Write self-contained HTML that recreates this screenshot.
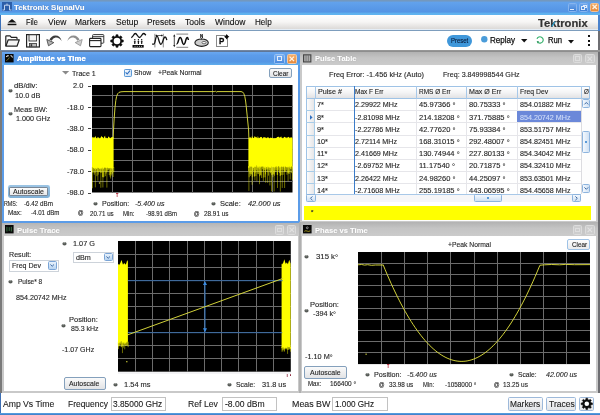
<!DOCTYPE html>
<html><head><meta charset="utf-8"><title>Tektronix SignalVu</title>
<style>
html,body{margin:0;padding:0}
body{width:600px;height:415px;overflow:hidden;background:#fff;position:relative;font-family:"Liberation Sans",sans-serif}
.a{position:absolute;box-sizing:border-box}
.t{position:absolute;white-space:nowrap;line-height:1;font-family:"Liberation Sans",sans-serif;transform-origin:0 0;will-change:transform;-webkit-text-stroke-width:0.12px}
.s{display:inline-block;transform-origin:0 0}
.d{position:relative;top:0.8px}
svg{position:absolute;overflow:visible}
</style></head><body>
<div class="a" style="left:0px;top:0px;width:600px;height:14.6px;background:linear-gradient(#7398be 0%,#7398be 7%,#62a2ec 14%,#5a9ae8 50%,#5494e4 80%,#5eb0ee 88%,#60b4f0 100%)"></div>
<svg class="a" style="left:2px;top:2px" width="10" height="10" viewBox="0 0 10 10"><rect width="10" height="9" fill="#2c5ea8"/><path d="M0.5 8 H2.5 V3.2 H7.5 V8 H9.5 M5 3.2 V1.5" fill="none" stroke="#cfe0f6" stroke-width="0.9"/></svg>
<span class="t" style="left:14px;top:3px;font-size:7.9px;color:#fff;transform:translate3d(0,0.89px,0);font-weight:bold;text-shadow:0 0 1px #2a5aa0;">Tektronix SignalVu</span>
<div class="a" style="left:567.5px;top:2.5px;width:9px;height:9.5px;background:linear-gradient(#6ea6ec,#3f7fd4);border-radius:1.5px;border:0.5px solid #86b4ee"></div>
<div class="a" style="left:570px;top:8.6px;width:3.6px;height:1.4px;background:#e8f0fb"></div>
<div class="a" style="left:579px;top:2.5px;width:9.3px;height:9.5px;background:linear-gradient(#6ea6ec,#3f7fd4);border-radius:1.5px;border:0.5px solid #86b4ee"></div>
<div class="a" style="left:582.6px;top:4.6px;width:4px;height:3.4px;border:0.9px solid #dfeafa"></div>
<div class="a" style="left:581px;top:6.4px;width:4px;height:3.4px;border:0.9px solid #dfeafa;background:#4f8ddd"></div>
<div class="a" style="left:590px;top:2.5px;width:8.5px;height:9.5px;background:linear-gradient(#f0a860,#e8893a);border-radius:1.5px;border:0.5px solid #f4c090"></div>
<svg class="a" style="left:591.6px;top:4.3px" width="5.4" height="5.8" viewBox="0 0 6 6"><path d="M0.6 0.6 L5.4 5.4 M5.4 0.6 L0.6 5.4" stroke="#fdf0e0" stroke-width="1.5"/></svg>
<div class="a" style="left:0px;top:14.6px;width:600px;height:14.6px;background:linear-gradient(#ffffff 0%,#f6f5f4 50%,#dddbd9 97%,#e6eef6 100%)"></div>
<div class="a" style="left:0px;top:29.2px;width:600px;height:0.7px;background:#e4edf6"></div>
<div class="a" style="left:0px;top:29.8px;width:600px;height:1.6px;background:linear-gradient(#86a4c2,#7496b8)"></div>
<div class="a" style="left:0px;top:14.5px;width:1.3px;height:16.5px;background:#3d71b8"></div>
<div class="a" style="left:598.2px;top:14.5px;width:1.8px;height:16.5px;background:#4a82cc"></div>
<svg class="a" style="left:7px;top:18.5px" width="10" height="7" viewBox="0 0 10 7"><path d="M5 0 L9.3 3.6 H0.7 Z" fill="#111"/><rect x="0.6" y="4.7" width="8.8" height="1.5" fill="#111"/></svg>
<span class="t" style="left:26px;top:18px;font-size:8.5px;color:#111;transform:translate3d(0,0.46px,0);-webkit-text-stroke:0.12px #111;"><span class="s" style="transform:scaleX(0.862)">File</span></span>
<span class="t" style="left:48px;top:18px;font-size:8.5px;color:#111;transform:translate3d(0,0.46px,0);-webkit-text-stroke:0.12px #111;">View</span>
<span class="t" style="left:75px;top:18px;font-size:8.5px;color:#111;transform:translate3d(0,0.46px,0);-webkit-text-stroke:0.12px #111;">Markers</span>
<span class="t" style="left:116px;top:18px;font-size:8.5px;color:#111;transform:translate3d(0,0.46px,0);-webkit-text-stroke:0.12px #111;">Setup</span>
<span class="t" style="left:147px;top:18px;font-size:8.5px;color:#111;transform:translate3d(0,0.46px,0);-webkit-text-stroke:0.12px #111;"><span class="s" style="transform:scaleX(0.983)">Presets</span></span>
<span class="t" style="left:185px;top:18px;font-size:8.5px;color:#111;transform:translate3d(0,0.46px,0);-webkit-text-stroke:0.12px #111;"><span class="s" style="transform:scaleX(1.010)">Tools</span></span>
<span class="t" style="left:215px;top:18px;font-size:8.5px;color:#111;transform:translate3d(0,0.46px,0);-webkit-text-stroke:0.12px #111;"><span class="s" style="transform:scaleX(1.007)">Window</span></span>
<span class="t" style="left:255px;top:18px;font-size:8.5px;color:#111;transform:translate3d(0,0.46px,0);-webkit-text-stroke:0.12px #111;"><span class="s" style="transform:scaleX(0.953)">Help</span></span>
<span class="t" style="left:538px;top:18px;font-size:10.3px;color:#333;transform:translate3d(0,0.68px,0);font-weight:bold;-webkit-text-stroke:0.2px #333;"><span class="s" style="transform:scaleX(1.089)">Tektronix</span></span>
<svg class="a" style="left:551px;top:19px" width="5" height="8" viewBox="0 0 5 8"><path d="M0.2 7.6 L3.3 2.6 L4.6 2.6 L1.6 7.6 Z" fill="#28a6d8"/></svg>
<div class="a" style="left:0px;top:31.4px;width:600px;height:19.6px;background:#fff"></div>
<div class="a" style="left:0px;top:31px;width:1.2px;height:20px;background:#6a6a6a"></div>
<div class="a" style="left:597.8px;top:31px;width:2.2px;height:382.3px;background:#6e6e72"></div>
<div class="a" style="left:0px;top:49.7px;width:300px;height:2.3px;background:linear-gradient(#7c8ea6,#566f92)"></div>
<div class="a" style="left:300px;top:49.7px;width:300px;height:2.3px;background:linear-gradient(#9a9a9a,#8a8a8a)"></div>
<svg class="a" style="left:5px;top:35px" width="15" height="12" viewBox="0 0 15 12"><path d="M0.8 11 V1.6 Q0.8 0.8 1.6 0.8 H5 L6.4 2.4 H11.4 Q12 2.4 12 3.2 V4.6" fill="none" stroke="#222" stroke-width="1.2"/><path d="M0.9 11.2 L3.2 4.8 H14.3 L12 11.2 Z" fill="#f4f4f4" stroke="#222" stroke-width="1.2" stroke-linejoin="round"/></svg>
<svg class="a" style="left:26px;top:34px" width="14" height="13.6" viewBox="0 0 14 13.6"><rect x="0.6" y="0.6" width="12.8" height="12.4" fill="#fff" stroke="#222" stroke-width="1.2"/><rect x="3" y="0.8" width="7.6" height="6.2" fill="#f2f2f2" stroke="#333" stroke-width="0.9"/><rect x="3.4" y="9.4" width="7" height="3.4" fill="#bbb" stroke="#333" stroke-width="0.8"/><rect x="4.6" y="10.2" width="1.6" height="2.4" fill="#333"/></svg>
<svg class="a" style="left:46px;top:32px" width="16" height="16" viewBox="0 0 16 16"><g transform="translate(0 0)"><path d="M15.7 9.2 Q14.4 3.4 9.2 3.5 Q5.4 3.8 3.4 7.6 L5.6 8.8 Q7 6 9.6 5.6 Q13.2 5.2 15.7 9.2 Z" fill="#3c3c3c"/><path d="M0.8 7.5 L7.8 10.6 L2.5 13.8 Z" fill="#b4b4b4" stroke="#3c3c3c" stroke-width="0.8" stroke-linejoin="round"/></g></svg>
<svg class="a" style="left:67.2px;top:32px" width="16" height="16" viewBox="0 0 16 16"><g transform="translate(16 0) scale(-1 1)"><path d="M15.7 9.2 Q14.4 3.4 9.2 3.5 Q5.4 3.8 3.4 7.6 L5.6 8.8 Q7 6 9.6 5.6 Q13.2 5.2 15.7 9.2 Z" fill="#8e8e8e"/><path d="M0.8 7.5 L7.8 10.6 L2.5 13.8 Z" fill="#cfcfcf" stroke="#8e8e8e" stroke-width="0.8" stroke-linejoin="round"/></g></svg>
<svg class="a" style="left:89px;top:34px" width="15.6" height="13.2" viewBox="0 0 15.6 13.2"><rect x="3.6" y="0.6" width="11.2" height="8.6" rx="0.8" fill="#fff" stroke="#333" stroke-width="1"/><path d="M3.6 2.6 H14.8" stroke="#333" stroke-width="0.9"/><rect x="0.6" y="4.4" width="11.4" height="8.2" rx="0.8" fill="#fff" stroke="#222" stroke-width="1.1"/><path d="M0.6 6.6 H12" stroke="#222" stroke-width="1.1"/></svg>
<svg class="a" style="left:110.4px;top:33.7px" width="14" height="14" viewBox="0 0 14 14"><path d="M11.76 5.86 L13.32 6.00 L13.32 8.00 L11.76 8.14 L11.18 9.56 L12.18 10.76 L10.76 12.18 L9.56 11.18 L8.14 11.76 L8.00 13.32 L6.00 13.32 L5.86 11.76 L4.44 11.18 L3.24 12.18 L1.82 10.76 L2.82 9.56 L2.24 8.14 L0.68 8.00 L0.68 6.00 L2.24 5.86 L2.82 4.44 L1.82 3.24 L3.24 1.82 L4.44 2.82 L5.86 2.24 L6.00 0.68 L8.00 0.68 L8.14 2.24 L9.56 2.82 L10.76 1.82 L12.18 3.24 L11.18 4.44 Z" fill="#0c0c0c" stroke="#0c0c0c" stroke-width="0.5" stroke-linejoin="round"/><circle cx="7" cy="7" r="3.3" fill="#fff"/></svg>
<svg class="a" style="left:131px;top:33px" width="15" height="15" viewBox="0 0 15 15"><path d="M0.2 4.5 C2 4.5 2.6 0.5 4.3 0.5 C6 0.5 6.8 4.5 8.5 4.5 C10.2 4.5 11 0.5 12.7 0.5 C13.6 0.5 14 1.4 14.8 2.2" fill="none" stroke="#111" stroke-width="1.3"/><path d="M3.8 6 V11 M7.4 6 V11 M10.7 6 V11" stroke="#111" stroke-width="1.1" stroke-dasharray="1.3 0.5"/><path d="M2.7 8.4 L3.8 10.6 L4.9 8.4 Z M6.3 8.4 L7.4 10.6 L8.5 8.4 Z M9.6 8.4 L10.7 10.6 L11.8 8.4 Z" fill="#111"/><rect x="1.5" y="12" width="11.2" height="2.6" fill="#0c0c0c"/><rect x="3.6" y="12.9" width="0.8" height="0.8" fill="#fff"/><rect x="5.8" y="12.9" width="0.8" height="0.8" fill="#fff"/><rect x="8" y="12.9" width="0.8" height="0.8" fill="#fff"/><rect x="10.2" y="12.9" width="0.8" height="0.8" fill="#fff"/></svg>
<svg class="a" style="left:152px;top:33px" width="15.4" height="15" viewBox="0 0 15.4 15"><path d="M2.9 0.8 V14.4 M11.3 0.8 V14.4" stroke="#555" stroke-width="0.7"/><path d="M0.1 11.1 H1.8 C3.4 11.1 3.4 3.2 5 3.2 C6.6 3.2 7 11.3 8.9 11.3 C10.8 11.3 11.2 4 13.1 4 C14.2 4 14.4 5.6 14.8 7.1" fill="none" stroke="#111" stroke-width="1.3"/><path d="M4 2.5 H10.2" stroke="#222" stroke-width="0.7"/><path d="M3.2 2.5 L5 1.4 V3.6 Z M11 2.5 L9.2 1.4 V3.6 Z" fill="#111"/></svg>
<svg class="a" style="left:172.6px;top:33px" width="15.6" height="15" viewBox="0 0 15.6 15"><path d="M3.4 1.1 H15.2 M3.4 14.3 H15.2" stroke="#666" stroke-width="0.8"/><path d="M1.3 2.6 V12.8" stroke="#222" stroke-width="0.8"/><path d="M1.3 1.2 L0.2 3.4 H2.4 Z M1.3 14.2 L0.2 12 H2.4 Z" fill="#222"/><path d="M3.5 10.9 C5.6 11.2 5.2 4.4 7.2 4.4 C9.2 4.4 8.8 11.4 10.8 11.4 C12.8 11.4 12.4 4.4 14.4 4.4 C15 4.4 15.2 5.8 15.4 7" fill="none" stroke="#0c0c0c" stroke-width="1.5"/></svg>
<svg class="a" style="left:194px;top:34px" width="15.4" height="13" viewBox="0 0 15.4 13"><ellipse cx="7.6" cy="8.7" rx="6.7" ry="3.7" fill="#cdcdcd" stroke="#1c1c1c" stroke-width="1.1"/><ellipse cx="10" cy="8.6" rx="2" ry="1.2" fill="#f2f2f2" stroke="#444" stroke-width="0.7"/><path d="M7.5 4.2 V5.6" stroke="#222" stroke-width="0.8"/></svg>
<span class="t" style="left:200px;top:34px;font-size:5.2px;color:#0a0a0a;transform:translate3d(0,0.47px,0);font-weight:bold;-webkit-text-stroke:0.2px #0a0a0a;"><span class="s" style="transform:scaleX(0.850)">N</span></span>
<div class="a" style="left:215.5px;top:35.3px;width:12.4px;height:12px;border:0.8px solid #8a8a8a;background:#fff"></div>
<span class="t" style="left:219px;top:37px;font-size:9.2px;color:#0a0a0a;transform:translate3d(0,0.46px,0);font-weight:bold;-webkit-text-stroke:0.3px #0a0a0a;"><span class="s" style="transform:scaleX(0.867)">P</span></span>
<div class="a" style="left:224.8px;top:34px;width:4.4px;height:4.4px;background:#fff"></div>
<svg class="a" style="left:224.4px;top:33.5px" width="5.4" height="5.4" viewBox="0 0 4.8 4.8"><path d="M2.4 0 L3.3 1.5 L4.8 2.4 L3.3 3.3 L2.4 4.8 L1.5 3.3 L0 2.4 L1.5 1.5 Z" fill="#0a0a0a"/><circle cx="2.4" cy="2.4" r="1.3" fill="#0a0a0a"/></svg>
<div class="a" style="left:446.7px;top:34.7px;width:25.4px;height:12px;background:#3f97da;border-radius:6px"></div>
<span class="t" style="left:451px;top:38px;font-size:6.6px;color:#081a3a;transform:translate3d(0,0.29px,0);"><span class="s" style="transform:scaleX(0.895)">Preset</span></span>
<svg class="a" style="left:481px;top:36.3px" width="6.6" height="6.6" viewBox="0 0 6.6 6.6"><circle cx="3.3" cy="3.3" r="3.2" fill="#4a9cd9"/></svg>
<span class="t" style="left:490px;top:35px;font-size:8.9px;color:#0c0c0c;transform:translate3d(0,0.86px,0);-webkit-text-stroke:0.25px #111;"><span class="s" style="transform:scaleX(0.907)">Replay</span></span>
<svg class="a" style="left:521px;top:39.2px" width="6.4" height="3.4" viewBox="0 0 6.4 3.4"><path d="M0 0 H6.4 L3.2 3.4 Z" fill="#111"/></svg>
<svg class="a" style="left:536.4px;top:35.7px" width="8" height="8" viewBox="0 0 8 8"><path d="M1 2.9 A3.2 3.2 0 1 1 1.9 6.4" fill="none" stroke="#33b06a" stroke-width="1.15"/><path d="M0.7 5.1 L3.2 5.4 L1.6 7.6 Z" fill="#1f8f52"/></svg>
<span class="t" style="left:548px;top:36px;font-size:8.8px;color:#0c0c0c;transform:translate3d(0,0.36px,0);-webkit-text-stroke:0.25px #111;"><span class="s" style="transform:scaleX(0.875)">Run</span></span>
<svg class="a" style="left:568px;top:39.6px" width="6" height="3.4" viewBox="0 0 6 3.4"><path d="M0 0 H6 L3 3.4 Z" fill="#111"/></svg>
<div class="a" style="left:588px;top:34.8px;width:2px;height:2px;background:#111"></div>
<div class="a" style="left:588px;top:39.6px;width:2px;height:2px;background:#111"></div>
<div class="a" style="left:588px;top:44.4px;width:2px;height:2px;background:#111"></div>
<div class="a" style="left:0px;top:51px;width:1.6px;height:342.5px;background:#7a7a7a"></div>
<div class="a" style="left:300px;top:51.8px;width:298.20000000000005px;height:170.8px;background:#fff;border:2.4px solid #c9c9c9;border-top:none"></div>
<div class="a" style="left:300px;top:51.8px;width:298.20000000000005px;height:13.6px;background:linear-gradient(#b2b2b2 0%,#c4c4c4 45%,#cbcbcb 100%)"></div>
<svg class="a" style="left:303.1px;top:53.599999999999994px" width="8.6" height="8.4" viewBox="0 0 9 9" preserveAspectRatio="none"><rect x="0.6" y="0.9" width="7.6" height="7.6" fill="#aeaeae" stroke="#454545" stroke-width="1.2"/><path d="M3.2 1 V8.4 M5.6 1 V8.4" stroke="#6a6a6a" stroke-width="0.8"/></svg>
<span class="t" style="left:315px;top:55px;font-size:7.7px;color:#fff;transform:translate3d(0,0.49px,0);font-weight:bold;text-shadow:0 0 1.2px rgba(90,90,90,.4);"><span class="s" style="transform:scaleX(0.986)">Pulse Table</span></span>
<div class="a" style="left:573.0px;top:54.0px;width:9.4px;height:9.4px;background:#cdcdcd;border:0.7px solid #dcdcdc;border-radius:1.5px"></div>
<div class="a" style="left:575.2px;top:56.4px;width:5px;height:4.6px;border:0.9px solid #dedede;border-top-width:1.5px"></div>
<div class="a" style="left:585.0px;top:54.0px;width:9.6px;height:9.4px;background:#cdcdcd;border:0.7px solid #dcdcdc;border-radius:1.5px"></div>
<svg class="a" style="left:587.0px;top:55.8px" width="5.6" height="5.8" viewBox="0 0 6 6"><path d="M0.6 0.6 L5.4 5.4 M5.4 0.6 L0.6 5.4" stroke="#e2e2e2" stroke-width="1.2"/></svg>
<div class="a" style="left:1.6px;top:222.4px;width:298.4px;height:170.99999999999997px;background:#fff;border:2.4px solid #c9c9c9;border-top:none"></div>
<div class="a" style="left:1.6px;top:222.4px;width:298.4px;height:13.6px;background:linear-gradient(#b2b2b2 0%,#c4c4c4 45%,#cbcbcb 100%)"></div>
<svg class="a" style="left:5.2px;top:224.8px" width="8.6" height="8.4" viewBox="0 0 9 9" preserveAspectRatio="none"><rect width="9" height="9" fill="#0a0a0a"/><path d="M2 2 V7 M4.4 2.4 V6.4 M6.6 2 V7" stroke="#4a9a5a" stroke-width="0.8" fill="none"/></svg>
<span class="t" style="left:17px;top:226px;font-size:7.7px;color:#fff;transform:translate3d(0,0.69px,0);font-weight:bold;text-shadow:0 0 1.2px rgba(90,90,90,.4);">Pulse Trace</span>
<div class="a" style="left:274.8px;top:225.2px;width:9.4px;height:9.4px;background:#cdcdcd;border:0.7px solid #dcdcdc;border-radius:1.5px"></div>
<div class="a" style="left:277.0px;top:227.6px;width:5px;height:4.6px;border:0.9px solid #dedede;border-top-width:1.5px"></div>
<div class="a" style="left:286.8px;top:225.2px;width:9.6px;height:9.4px;background:#cdcdcd;border:0.7px solid #dcdcdc;border-radius:1.5px"></div>
<svg class="a" style="left:288.8px;top:227.0px" width="5.6" height="5.8" viewBox="0 0 6 6"><path d="M0.6 0.6 L5.4 5.4 M5.4 0.6 L0.6 5.4" stroke="#e2e2e2" stroke-width="1.2"/></svg>
<div class="a" style="left:300px;top:222.4px;width:298.20000000000005px;height:170.99999999999997px;background:#fff;border:2.4px solid #c9c9c9;border-top:none"></div>
<div class="a" style="left:300px;top:222.4px;width:298.20000000000005px;height:13.6px;background:linear-gradient(#b2b2b2 0%,#c4c4c4 45%,#cbcbcb 100%)"></div>
<svg class="a" style="left:303.1px;top:224.8px" width="8.6" height="8.4" viewBox="0 0 9 9" preserveAspectRatio="none"><rect width="9" height="9" fill="#0a0a0a"/><circle cx="4.5" cy="3" r="1" fill="none" stroke="#ddd" stroke-width="0.6"/><path d="M1.4 6.8 Q3 5.6 4.5 6.6 Q6 7.4 7.6 6.2" stroke="#c8b820" stroke-width="0.8" fill="none"/></svg>
<span class="t" style="left:315px;top:226px;font-size:7.7px;color:#fff;transform:translate3d(0,0.69px,0);font-weight:bold;text-shadow:0 0 1.2px rgba(90,90,90,.4);"><span class="s" style="transform:scaleX(0.989)">Phase vs Time</span></span>
<div class="a" style="left:573.0px;top:225.2px;width:9.4px;height:9.4px;background:#cdcdcd;border:0.7px solid #dcdcdc;border-radius:1.5px"></div>
<div class="a" style="left:575.2px;top:227.6px;width:5px;height:4.6px;border:0.9px solid #dedede;border-top-width:1.5px"></div>
<div class="a" style="left:585.0px;top:225.2px;width:9.6px;height:9.4px;background:#cdcdcd;border:0.7px solid #dcdcdc;border-radius:1.5px"></div>
<svg class="a" style="left:587.0px;top:227.0px" width="5.6" height="5.8" viewBox="0 0 6 6"><path d="M0.6 0.6 L5.4 5.4 M5.4 0.6 L0.6 5.4" stroke="#e2e2e2" stroke-width="1.2"/></svg>
<div class="a" style="left:1.6px;top:51.8px;width:298.59999999999997px;height:170.8px;background:#fff;border:2.4px solid #5b9ce8;border-top:none"></div>
<div class="a" style="left:1.6px;top:51.8px;width:298.59999999999997px;height:13.6px;background:linear-gradient(#6aa8f0 0%,#5c9cea 25%,#5596e4 75%,#60aeec 100%)"></div>
<svg class="a" style="left:5.2px;top:53.599999999999994px" width="8.6" height="8.4" viewBox="0 0 9 9" preserveAspectRatio="none"><rect width="9" height="9" fill="#080808"/><path d="M1.6 7.3 L3 5.6 L4.6 4.4" stroke="#8a7420" stroke-width="1" fill="none"/><path d="M3.6 4.6 L4.8 3.6" stroke="#4a6a30" stroke-width="0.9" fill="none"/><path d="M1.2 3.2 L2.6 2 L4 1.9" stroke="#e8e8e8" stroke-width="1.1" fill="none"/><path d="M5.8 1.6 L7 2.2 L7.9 3.8" stroke="#e0e0e0" stroke-width="1.1" fill="none"/></svg>
<span class="t" style="left:17px;top:55px;font-size:7.7px;color:#fff;transform:translate3d(0,0.49px,0);font-weight:bold;text-shadow:0 0 0.6px #fff;"><span class="s" style="transform:scaleX(1.007)">Amplitude vs Time</span></span>
<div class="a" style="left:274.4px;top:53.699999999999996px;width:10.2px;height:10px;background:linear-gradient(#78aef0,#4a8ade);border:0.6px solid #9cc4f4;border-radius:1.5px"></div>
<div class="a" style="left:277.2px;top:56.4px;width:5px;height:4.6px;border:0.9px solid #e4eefc;border-top-width:1.6px"></div>
<div class="a" style="left:286.7px;top:53.699999999999996px;width:10.2px;height:10px;background:linear-gradient(#f2ae6c,#e88a3c);border:0.6px solid #f6caa0;border-radius:1.5px"></div>
<svg class="a" style="left:289.0px;top:55.8px" width="5.6" height="5.8" viewBox="0 0 6 6"><path d="M0.6 0.6 L5.4 5.4 M5.4 0.6 L0.6 5.4" stroke="#fff4e6" stroke-width="1.4"/></svg>
<div class="a" style="left:299.3px;top:222.4px;width:1.4px;height:171px;background:#b0b0b0"></div>
<svg class="a" style="left:92px;top:85px" width="200.5" height="107.5" viewBox="0 0 200.5 107.5"><rect x="0" y="0" width="200.5" height="107.5" fill="#000"/><path d="M20.05 0 V107.5 M40.10 0 V107.5 M60.15 0 V107.5 M80.20 0 V107.5 M100.25 0 V107.5 M120.30 0 V107.5 M140.35 0 V107.5 M160.40 0 V107.5 M180.45 0 V107.5 M0 10.75 H200.5 M0 21.50 H200.5 M0 32.25 H200.5 M0 43.00 H200.5 M0 53.75 H200.5 M0 64.50 H200.5 M0 75.25 H200.5 M0 86.00 H200.5 M0 96.75 H200.5 " stroke="#6c6c6c" stroke-width="1" fill="none" shape-rendering="crispEdges"/><path d="M0.00 52.10 L0.45 52.87 L0.90 51.63 L1.35 52.09 L1.80 53.36 L2.25 51.92 L2.70 52.70 L3.15 51.73 L3.60 50.78 L4.05 53.11 L4.50 53.53 L4.95 52.53 L5.40 51.80 L5.85 53.63 L6.30 52.23 L6.75 52.34 L7.20 53.50 L7.65 53.40 L8.10 51.94 L8.55 53.50 L9.00 52.04 L9.45 50.76 L9.90 51.79 L10.35 51.92 L10.80 52.26 L11.25 53.11 L11.70 53.66 L12.15 51.09 L12.60 52.01 L13.05 50.47 L13.50 53.61 L13.95 52.57 L14.40 52.85 L14.85 53.58 L15.30 53.11 L15.75 53.65 L16.20 51.62 L16.65 51.64 L17.10 51.73 L17.55 53.03 L18.00 52.58 L18.45 53.62 L18.90 52.84 L19.35 52.26 L19.80 52.23 L20.25 51.66 L20.70 52.25 L21.15 52.10 L21.60 53.07 L21.60 82.57 L21.15 82.84 L20.70 83.73 L20.25 83.56 L19.80 83.65 L19.35 83.23 L18.90 82.67 L18.45 82.90 L18.00 83.42 L17.55 83.50 L17.10 82.92 L16.65 83.32 L16.20 83.19 L15.75 83.12 L15.30 82.52 L14.85 82.83 L14.40 83.29 L13.95 83.35 L13.50 82.71 L13.05 82.55 L12.60 83.27 L12.15 81.88 L11.70 84.20 L11.25 83.91 L10.80 81.91 L10.35 83.65 L9.90 82.79 L9.45 84.18 L9.00 83.18 L8.55 83.51 L8.10 84.12 L7.65 83.41 L7.20 84.03 L6.75 83.20 L6.30 82.73 L5.85 83.30 L5.40 82.32 L4.95 83.91 L4.50 83.72 L4.05 83.51 L3.60 82.93 L3.15 83.22 L2.70 83.41 L2.25 83.88 L1.80 83.33 L1.35 82.93 L0.90 82.42 L0.45 81.96 L0.00 82.69 Z" fill="#ffff00"/><path d="M0.20 82.00 V87.12 M0.94 82.00 V87.97 M1.69 82.00 V85.79 M2.26 82.00 V89.68 M3.02 82.00 V88.07 M3.55 82.00 V85.40 M4.18 82.00 V85.97 M4.92 82.00 V91.20 M5.43 82.00 V86.67 M6.16 82.00 V89.61 M6.89 82.00 V87.21 M7.39 82.00 V86.78 M8.12 82.00 V86.61 M8.69 82.00 V87.79 M9.29 82.00 V87.73 M10.06 82.00 V85.68 M10.51 82.00 V92.04 M11.27 82.00 V92.39 M11.87 82.00 V92.10 M12.64 82.00 V86.22 M13.35 82.00 V91.18 M14.04 82.00 V88.62 M14.59 82.00 V87.18 M15.12 82.00 V84.97 M15.77 82.00 V86.74 M16.51 82.00 V84.79 M17.27 82.00 V90.03 M18.05 82.00 V91.66 M18.81 82.00 V89.08 M19.27 82.00 V90.44 M19.78 82.00 V86.85 M20.46 82.00 V88.66 M21.05 82.00 V92.01 M21.72 82.00 V87.18 " stroke="#ffff00" stroke-width="0.55" fill="none" opacity="0.92"/><path d="M0.50 82.00 V103.27 M3.34 82.00 V102.37 M5.86 82.00 V95.70 M8.85 82.00 V102.76 M10.89 82.00 V102.48 M14.89 82.00 V102.64 M18.63 82.00 V93.54 " stroke="#ffff00" stroke-width="0.5" fill="none" opacity="0.85"/><path d="M156.40 52.91 L156.85 53.58 L157.30 51.66 L157.75 52.96 L158.20 52.59 L158.65 52.07 L159.10 53.52 L159.55 53.27 L160.00 50.41 L160.45 52.05 L160.90 52.21 L161.35 53.02 L161.80 53.05 L162.25 52.23 L162.70 51.07 L163.15 51.61 L163.60 52.25 L164.05 52.26 L164.50 51.72 L164.95 53.17 L165.40 53.25 L165.85 50.92 L166.30 52.01 L166.75 53.58 L167.20 52.70 L167.65 53.17 L168.10 51.68 L168.55 52.32 L169.00 52.31 L169.45 52.26 L169.90 51.76 L170.35 53.69 L170.80 53.67 L171.25 52.10 L171.70 52.56 L172.15 52.48 L172.60 51.87 L173.05 52.92 L173.50 52.51 L173.95 52.22 L174.40 53.39 L174.85 52.63 L175.30 52.21 L175.75 52.39 L176.20 52.92 L176.65 51.79 L177.10 53.42 L177.55 53.23 L178.00 53.20 L178.45 52.19 L178.90 53.05 L179.35 52.96 L179.80 52.75 L180.25 52.57 L180.70 53.28 L181.15 53.15 L181.60 53.37 L182.05 53.65 L182.50 52.71 L182.95 53.57 L183.40 53.11 L183.85 53.24 L184.30 52.48 L184.75 52.94 L185.20 51.94 L185.65 52.06 L186.10 51.69 L186.55 51.71 L187.00 51.98 L187.45 52.58 L187.90 52.84 L188.35 51.60 L188.80 52.46 L189.25 51.21 L189.70 52.74 L190.15 53.61 L190.60 53.31 L191.05 51.90 L191.50 53.61 L191.95 52.34 L192.40 51.83 L192.85 51.90 L193.30 52.39 L193.75 52.21 L194.20 53.62 L194.65 52.15 L195.10 52.47 L195.55 52.63 L196.00 51.86 L196.45 52.22 L196.90 51.63 L197.35 53.56 L197.80 52.16 L198.25 52.22 L198.70 52.95 L199.15 51.85 L199.60 52.72 L200.05 52.71 L200.50 53.16 L200.50 80.89 L200.05 81.67 L199.60 81.51 L199.15 81.52 L198.70 82.58 L198.25 81.94 L197.80 83.17 L197.35 81.39 L196.90 81.46 L196.45 82.78 L196.00 81.86 L195.55 81.94 L195.10 83.16 L194.65 81.99 L194.20 82.23 L193.75 81.71 L193.30 81.34 L192.85 82.94 L192.40 82.28 L191.95 80.80 L191.50 82.26 L191.05 82.15 L190.60 81.69 L190.15 81.81 L189.70 82.19 L189.25 81.03 L188.80 82.80 L188.35 81.47 L187.90 82.97 L187.45 82.27 L187.00 80.89 L186.55 81.56 L186.10 81.34 L185.65 82.31 L185.20 82.36 L184.75 80.87 L184.30 82.66 L183.85 82.40 L183.40 81.21 L182.95 82.46 L182.50 82.81 L182.05 82.04 L181.60 82.45 L181.15 81.64 L180.70 82.35 L180.25 82.35 L179.80 82.41 L179.35 80.83 L178.90 83.07 L178.45 82.65 L178.00 82.49 L177.55 82.39 L177.10 82.69 L176.65 82.68 L176.20 81.61 L175.75 83.10 L175.30 81.15 L174.85 81.95 L174.40 81.89 L173.95 83.20 L173.50 82.83 L173.05 81.06 L172.60 83.08 L172.15 82.81 L171.70 80.93 L171.25 82.78 L170.80 81.77 L170.35 80.92 L169.90 82.45 L169.45 81.23 L169.00 82.11 L168.55 83.00 L168.10 81.02 L167.65 82.86 L167.20 81.06 L166.75 81.65 L166.30 83.03 L165.85 83.09 L165.40 82.19 L164.95 80.84 L164.50 80.85 L164.05 82.49 L163.60 81.95 L163.15 81.61 L162.70 82.25 L162.25 81.20 L161.80 82.94 L161.35 83.06 L160.90 82.09 L160.45 82.89 L160.00 81.30 L159.55 82.28 L159.10 81.18 L158.65 81.47 L158.20 82.11 L157.75 81.07 L157.30 83.06 L156.85 83.01 L156.40 82.71 Z" fill="#ffff00"/><path d="M156.60 81.00 V86.01 M157.21 81.00 V92.22 M157.97 81.00 V88.75 M158.43 81.00 V90.93 M159.03 81.00 V89.03 M159.72 81.00 V89.56 M160.34 81.00 V92.17 M160.93 81.00 V87.31 M161.67 81.00 V85.49 M162.23 81.00 V91.41 M162.70 81.00 V91.47 M163.39 81.00 V87.70 M163.94 81.00 V90.95 M164.71 81.00 V84.98 M165.33 81.00 V88.78 M165.96 81.00 V86.74 M166.46 81.00 V89.13 M167.19 81.00 V84.29 M167.72 81.00 V91.31 M168.45 81.00 V89.85 M168.91 81.00 V90.41 M169.70 81.00 V92.98 M170.40 81.00 V84.11 M171.14 81.00 V85.70 M171.82 81.00 V92.55 M172.52 81.00 V84.91 M173.07 81.00 V92.23 M173.57 81.00 V89.36 M174.17 81.00 V85.16 M174.84 81.00 V84.06 M175.32 81.00 V87.20 M175.80 81.00 V84.19 M176.45 81.00 V90.59 M177.21 81.00 V84.91 M177.81 81.00 V86.59 M178.47 81.00 V88.23 M179.25 81.00 V87.15 M179.72 81.00 V90.17 M180.22 81.00 V89.55 M180.85 81.00 V92.16 M181.49 81.00 V89.46 M182.03 81.00 V88.81 M182.57 81.00 V90.67 M183.20 81.00 V84.90 M183.73 81.00 V87.12 M184.44 81.00 V85.33 M185.14 81.00 V89.77 M185.62 81.00 V89.90 M186.10 81.00 V84.82 M186.76 81.00 V85.88 M187.52 81.00 V88.14 M188.08 81.00 V91.10 M188.54 81.00 V90.43 M189.01 81.00 V85.06 M189.79 81.00 V90.02 M190.32 81.00 V84.74 M191.11 81.00 V89.87 M191.85 81.00 V84.96 M192.52 81.00 V86.96 M193.05 81.00 V86.77 M193.72 81.00 V86.91 M194.30 81.00 V84.93 M195.04 81.00 V89.71 M195.77 81.00 V87.70 M196.52 81.00 V88.49 M197.18 81.00 V89.01 M197.89 81.00 V87.35 M198.37 81.00 V83.96 M198.89 81.00 V84.02 M199.65 81.00 V88.15 M200.37 81.00 V83.65 " stroke="#ffff00" stroke-width="0.55" fill="none" opacity="0.92"/><path d="M156.90 81.00 V105.85 M160.11 81.00 V99.76 M162.92 81.00 V95.42 M164.92 81.00 V96.20 M167.50 81.00 V99.19 M171.39 81.00 V96.11 M173.65 81.00 V97.76 M175.67 81.00 V97.89 M177.88 81.00 V100.46 M179.56 81.00 V106.30 M182.12 81.00 V106.48 M185.51 81.00 V102.99 M188.34 81.00 V106.58 M190.24 81.00 V102.93 M192.60 81.00 V103.00 M196.10 81.00 V96.25 M198.22 81.00 V94.43 M200.42 81.00 V95.13 " stroke="#ffff00" stroke-width="0.5" fill="none" opacity="0.85"/><path d="M21.20 54.00 L21.50 45.00 L22.20 33.00 L23.00 22.50 L23.80 15.50 L24.60 11.50 L25.60 8.80 L27.00 7.40 L29.00 6.80 L32.00 6.60 L122.60 6.60 L123.20 6.00 L124.40 7.00 L125.00 6.60 L149.00 6.60 L150.60 7.00 L151.80 8.60 L152.80 11.50 L153.60 16.00 L154.20 21.00 L155.00 29.00 L155.80 37.00 L156.60 45.00 L156.90 54.00" fill="none" stroke="#dcdc3c" stroke-width="0.95" stroke-linejoin="round"/><rect x="6.9" y="97.4" width="1.2" height="1.2" fill="#dcdc3c"/></svg>
<span class="t" style="left:116px;top:194px;font-size:4.6px;color:#b02030;transform:translate3d(0,0.37px,0);font-weight:bold;"><span class="s" style="transform:scaleX(0.800)">T</span></span>
<svg class="a" style="left:118.2px;top:241.3px" width="172.8" height="130.7" viewBox="0 0 172.8 130.7"><rect x="0" y="0" width="172.8" height="130.7" fill="#000"/><path d="M17.28 0 V130.7 M34.56 0 V130.7 M51.84 0 V130.7 M69.12 0 V130.7 M86.40 0 V130.7 M103.68 0 V130.7 M120.96 0 V130.7 M138.24 0 V130.7 M155.52 0 V130.7 M0 13.07 H172.8 M0 26.14 H172.8 M0 39.21 H172.8 M0 52.28 H172.8 M0 65.35 H172.8 M0 78.42 H172.8 M0 91.49 H172.8 M0 104.56 H172.8 M0 117.63 H172.8 " stroke="#6c6c6c" stroke-width="1" fill="none" shape-rendering="crispEdges"/><path d="M0.00 23.38 L0.45 23.40 L0.90 22.98 L1.35 23.89 L1.80 22.84 L2.25 22.29 L2.70 20.89 L3.15 19.48 L3.60 19.32 L4.05 20.73 L4.50 22.14 L4.95 23.54 L5.40 23.30 L5.85 22.40 L6.30 21.79 L6.75 22.80 L7.20 23.24 L7.65 23.40 L8.10 22.81 L8.55 21.38 L9.00 19.77 L9.45 19.24 L9.90 20.84 L9.90 101.84 L9.45 100.64 L9.00 100.78 L8.55 101.30 L8.10 102.37 L7.65 101.45 L7.20 102.68 L6.75 102.80 L6.30 101.46 L5.85 101.05 L5.40 102.52 L4.95 101.17 L4.50 101.70 L4.05 102.52 L3.60 100.57 L3.15 100.64 L2.70 100.88 L2.25 102.82 L1.80 102.16 L1.35 101.23 L0.90 102.01 L0.45 101.91 L0.00 102.72 Z" fill="#ffff00"/><path d="M0.20 100.70 V104.35 M0.72 100.70 V105.56 M1.21 100.70 V105.19 M1.70 100.70 V104.24 M2.23 100.70 V103.60 M3.02 100.70 V105.86 M3.57 100.70 V106.21 M4.10 100.70 V104.13 M4.85 100.70 V105.18 M5.33 100.70 V106.65 M5.86 100.70 V103.55 M6.58 100.70 V103.85 M7.13 100.70 V102.76 M7.61 100.70 V104.93 M8.15 100.70 V105.01 M8.73 100.70 V104.38 M9.51 100.70 V104.51 M10.16 100.70 V106.13 " stroke="#ffff00" stroke-width="0.55" fill="none" opacity="0.92"/><path d="M0.50 100.70 V108.12 M4.46 100.70 V112.11 M6.71 100.70 V108.34 " stroke="#ffff00" stroke-width="0.5" fill="none" opacity="0.85"/><path d="M163.60 22.59 L164.05 23.47 L164.50 22.42 L164.95 22.40 L165.40 21.20 L165.85 19.70 L166.30 18.20 L166.75 19.70 L167.20 21.20 L167.65 22.70 L168.10 22.60 L168.55 21.70 L169.00 21.60 L169.45 22.50 L169.90 23.22 L170.35 21.75 L170.80 20.31 L171.25 18.86 L171.70 19.99 L172.15 21.43 L172.60 22.78 L172.60 107.74 L172.15 107.79 L171.70 106.38 L171.25 106.07 L170.80 106.45 L170.35 106.11 L169.90 105.92 L169.45 105.82 L169.00 107.16 L168.55 107.47 L168.10 106.53 L167.65 106.85 L167.20 107.54 L166.75 107.78 L166.30 107.43 L165.85 105.85 L165.40 107.51 L164.95 106.01 L164.50 107.26 L164.05 106.05 L163.60 107.14 Z" fill="#ffff00"/><path d="M163.80 105.70 V107.35 M164.30 105.70 V109.62 M165.04 105.70 V109.13 M165.55 105.70 V108.46 M166.30 105.70 V109.86 M167.03 105.70 V107.83 M167.78 105.70 V108.34 M168.48 105.70 V107.63 M169.27 105.70 V109.02 M169.98 105.70 V107.85 M170.64 105.70 V108.95 M171.30 105.70 V108.29 M172.00 105.70 V108.24 M172.56 105.70 V107.71 " stroke="#ffff00" stroke-width="0.55" fill="none" opacity="0.92"/><path d="M164.10 105.70 V111.02 M166.29 105.70 V110.84 M169.56 105.70 V112.89 M172.57 105.70 V110.71 " stroke="#ffff00" stroke-width="0.5" fill="none" opacity="0.85"/><path d="M9.799999999999997 39.69999999999999 H164.8 M9.799999999999997 91.69999999999999 H164.3" stroke="#2869b6" stroke-width="0.8" fill="none"/><path d="M86.99999999999999 42.19999999999999 V89.19999999999999" stroke="#2f7fd6" stroke-width="0.9" fill="none"/><path d="M86.99999999999999 39.89999999999998 l-2 4.2 h4 Z M86.99999999999999 91.5 l-2 -4.2 h4 Z" fill="#3a8ae0"/><path d="M9.299999999999997 94.0 L165.2 37.30000000000001" stroke="#dcdc3c" stroke-width="0.95" fill="none"/><rect x="8.199999999999998" y="120.1" width="1.2" height="1.2" fill="#dcdc3c"/></svg>
<span class="t" style="left:286px;top:372px;font-size:5px;color:#8a2036;transform:translate3d(0,0.67px,0);font-weight:bold;"><span class="s" style="transform:scaleX(0.800)">T</span></span>
<div class="a" style="left:289.8px;top:374.2px;width:1.5px;height:1.6px;background:#8a2036;border-radius:0.7px"></div>
<svg class="a" style="left:358.4px;top:251.8px" width="232" height="112.1" viewBox="0 0 232 112.1"><rect x="0" y="0" width="232" height="112.1" fill="#000"/><path d="M23.20 0 V112.1 M46.40 0 V112.1 M69.60 0 V112.1 M92.80 0 V112.1 M116.00 0 V112.1 M139.20 0 V112.1 M162.40 0 V112.1 M185.60 0 V112.1 M208.80 0 V112.1 M0 11.21 H232 M0 22.42 H232 M0 33.63 H232 M0 44.84 H232 M0 56.05 H232 M0 67.26 H232 M0 78.47 H232 M0 89.68 H232 M0 100.89 H232 " stroke="#6c6c6c" stroke-width="1" fill="none" shape-rendering="crispEdges"/><path d="M0.00 12.80 L3.60 12.50 L6.60 13.10 L9.60 12.70 L13.60 13.30 L17.60 13.00 L24.80 13.00 L25.10 12.71 L27.10 17.58 L29.10 22.32 L31.10 26.93 L33.10 31.42 L35.10 35.78 L37.10 40.01 L39.10 44.13 L41.10 48.11 L43.10 51.97 L45.10 55.70 L47.10 59.31 L49.10 62.80 L51.10 66.15 L53.10 69.39 L55.10 72.49 L57.10 75.47 L59.10 78.33 L61.10 81.06 L63.10 83.66 L65.10 86.14 L67.10 88.50 L69.10 90.72 L71.10 92.83 L73.10 94.80 L75.10 96.66 L77.10 98.38 L79.10 99.98 L81.10 101.46 L83.10 102.81 L85.10 104.03 L87.10 105.13 L89.10 106.10 L91.10 106.95 L93.10 107.67 L95.10 108.27 L97.10 108.74 L99.10 109.08 L101.10 109.30 L103.10 109.40 L105.10 109.36 L107.10 109.21 L109.10 108.93 L111.10 108.52 L113.10 107.98 L115.10 107.32 L117.10 106.54 L119.10 105.63 L121.10 104.59 L123.10 103.43 L125.10 102.15 L127.10 100.74 L129.10 99.20 L131.10 97.53 L133.10 95.75 L135.10 93.83 L137.10 91.79 L139.10 89.63 L141.10 87.34 L143.10 84.92 L145.10 82.38 L147.10 79.71 L149.10 76.92 L151.10 74.00 L153.10 70.96 L155.10 67.79 L157.10 64.49 L159.10 61.07 L161.10 57.52 L163.10 53.85 L165.10 50.06 L167.10 46.13 L169.10 42.09 L171.10 37.91 L173.10 33.61 L175.10 29.19 L177.10 24.64 L179.10 19.96 L181.10 15.16 L182.00 13.20 L186.60 12.80 L193.60 12.50 L201.60 12.80 L207.60 12.40 L216.60 12.70 L232.00 12.60" fill="none" stroke="#dcdc3c" stroke-width="0.95" stroke-linejoin="round"/><rect x="7.500000000000023" y="101.6" width="1.2" height="1.2" fill="#dcdc3c"/></svg>
<span class="t" style="left:387px;top:365px;font-size:4.6px;color:#b02030;transform:translate3d(0,0.37px,0);font-weight:bold;"><span class="s" style="transform:scaleX(0.800)">T</span></span>
<svg class="a" style="left:62px;top:70.6px" width="7.2" height="3.6" viewBox="0 0 7.2 3.6"><path d="M0 0 H7.2 L3.6 3.6 Z" fill="#8a8a8a"/></svg>
<span class="t" style="left:72px;top:69px;font-size:7.4px;color:#262626;transform:translate3d(0,0.79px,0);"><span class="s" style="transform:scaleX(0.958)">Trace 1</span></span>
<div class="a" style="left:123.6px;top:68.7px;width:8px;height:8px;border:0.8px solid #5a98d6;border-radius:1.2px;background:linear-gradient(135deg,#f4f9fe,#cfe2f6)"></div>
<svg class="a" style="left:124.8px;top:70.2px" width="5.6" height="5" viewBox="0 0 5.6 5"><path d="M0.6 2.4 L2.2 4 L5 0.6" fill="none" stroke="#2f6fc0" stroke-width="1.1"/></svg>
<span class="t" style="left:134px;top:69px;font-size:7.4px;color:#262626;transform:translate3d(0,0.39px,0);"><span class="s" style="transform:scaleX(0.932)">Show</span></span>
<span class="t" style="left:158px;top:69px;font-size:7.4px;color:#262626;transform:translate3d(0,0.49px,0);"><span class="s" style="transform:scaleX(0.926)">+Peak Normal</span></span>
<div class="a" style="left:269.1px;top:67.6px;width:22.8px;height:10.8px;border:0.9px solid #84a0bc;border-radius:2px;background:linear-gradient(#fafafa,#e2e3e5)"></div>
<span class="t" style="left:273px;top:70px;font-size:6.9px;color:#262626;transform:translate3d(0,0.69px,0);"><span class="s" style="transform:scaleX(0.938)">Clear</span></span>
<svg class="a" style="left:7.5px;top:88.1px" width="5" height="5" viewBox="0 0 5 5"><ellipse cx="2.5" cy="2.7" rx="2.1" ry="1.8" fill="#565a56"/><ellipse cx="2.3" cy="1.7" rx="1" ry="0.6" fill="#a8aca8"/></svg>
<svg class="a" style="left:7.9px;top:111.2px" width="5" height="5" viewBox="0 0 5 5"><ellipse cx="2.5" cy="2.7" rx="2.1" ry="1.8" fill="#565a56"/><ellipse cx="2.3" cy="1.7" rx="1" ry="0.6" fill="#a8aca8"/></svg>
<span class="t" style="left:14px;top:82px;font-size:7.2px;color:#262626;transform:translate3d(0,0.39px,0);"><span class="s" style="transform:scaleX(1.075)">dB/div:</span></span>
<span class="t" style="left:15px;top:91px;font-size:7.2px;color:#262626;transform:translate3d(0,0.69px,0);"><span class="s" style="transform:scaleX(1.021)">10.0 dB</span></span>
<span class="t" style="left:14px;top:105px;font-size:7.2px;color:#262626;transform:translate3d(0,0.69px,0);"><span class="s" style="transform:scaleX(1.016)">Meas BW:</span></span>
<span class="t" style="left:16px;top:114px;font-size:7.2px;color:#262626;transform:translate3d(0,0.79px,0);">1.000 GHz</span>
<span class="t" style="left:73px;top:82px;font-size:7.2px;color:#262626;transform:translate3d(0,0.09px,0);"><span class="s" style="transform:scaleX(1.030)">2.0</span></span>
<div class="a" style="left:88.4px;top:85.5px;width:2.2px;height:0.8px;background:#444"></div>
<span class="t" style="left:67px;top:103px;font-size:7.2px;color:#262626;transform:translate3d(0,0.55px,0);"><span class="s" style="transform:scaleX(1.030)">-18.0</span></span>
<div class="a" style="left:88.4px;top:106.96000000000001px;width:2.2px;height:0.8px;background:#444"></div>
<span class="t" style="left:67px;top:125px;font-size:7.2px;color:#262626;transform:translate3d(0,0.01px,0);"><span class="s" style="transform:scaleX(1.030)">-38.0</span></span>
<div class="a" style="left:88.4px;top:128.42px;width:2.2px;height:0.8px;background:#444"></div>
<span class="t" style="left:67px;top:146px;font-size:7.2px;color:#262626;transform:translate3d(0,0.47px,0);"><span class="s" style="transform:scaleX(1.030)">-58.0</span></span>
<div class="a" style="left:88.4px;top:149.88px;width:2.2px;height:0.8px;background:#444"></div>
<span class="t" style="left:67px;top:167px;font-size:7.2px;color:#262626;transform:translate3d(0,0.93px,0);"><span class="s" style="transform:scaleX(1.030)">-78.0</span></span>
<div class="a" style="left:88.4px;top:171.34px;width:2.2px;height:0.8px;background:#444"></div>
<span class="t" style="left:67px;top:189px;font-size:7.2px;color:#262626;transform:translate3d(0,0.39px,0);"><span class="s" style="transform:scaleX(1.030)">-98.0</span></span>
<div class="a" style="left:88.4px;top:192.8px;width:2.2px;height:0.8px;background:#444"></div>
<div class="a" style="left:7.6px;top:185.3px;width:42px;height:12.8px;border-radius:2.4px;background:linear-gradient(#9cc4e4,#7fb0d6)"></div>
<div class="a" style="left:9.2px;top:186.9px;width:38.8px;height:9.600000000000001px;border:0.7px solid #7a8796;border-radius:1.2px;background:linear-gradient(#fcfcfc,#e8e9ea)"></div>
<span class="t" style="left:13px;top:188px;font-size:7.2px;color:#262626;transform:translate3d(0,0.39px,0);"><span class="s" style="transform:scaleX(0.981)">Autoscale</span></span>
<span class="t" style="left:4px;top:201px;font-size:6.6px;color:#262626;transform:translate3d(0,0.19px,0);"><span class="s" style="transform:scaleX(0.812)">RMS:</span></span>
<span class="t" style="left:24px;top:201px;font-size:6.6px;color:#262626;transform:translate3d(0,0.19px,0);"><span class="s" style="transform:scaleX(0.950)">-6.42 dBm</span></span>
<span class="t" style="left:8px;top:210px;font-size:6.6px;color:#262626;transform:translate3d(0,0.49px,0);"><span class="s" style="transform:scaleX(0.964)">Max:</span></span>
<span class="t" style="left:31px;top:210px;font-size:6.6px;color:#262626;transform:translate3d(0,0.49px,0);"><span class="s" style="transform:scaleX(0.933)">-4.01 dBm</span></span>
<span class="t" style="left:78px;top:210px;font-size:6.4px;color:#1c1c1c;transform:translate3d(0,0.49px,0);font-weight:bold;"><span class="s" style="transform:scaleX(0.867)">@</span></span>
<span class="t" style="left:90px;top:210px;font-size:6.6px;color:#262626;transform:translate3d(0,0.69px,0);"><span class="s" style="transform:scaleX(0.936)">20.71 us</span></span>
<span class="t" style="left:123px;top:210px;font-size:6.6px;color:#262626;transform:translate3d(0,0.69px,0);"><span class="s" style="transform:scaleX(0.917)">Min:</span></span>
<span class="t" style="left:146px;top:210px;font-size:6.6px;color:#262626;transform:translate3d(0,0.69px,0);"><span class="s" style="transform:scaleX(0.906)">-98.91 dBm</span></span>
<span class="t" style="left:194px;top:210px;font-size:6.4px;color:#1c1c1c;transform:translate3d(0,0.79px,0);font-weight:bold;"><span class="s" style="transform:scaleX(0.867)">@</span></span>
<span class="t" style="left:204px;top:210px;font-size:6.6px;color:#262626;transform:translate3d(0,0.79px,0);"><span class="s" style="transform:scaleX(0.968)">28.91 us</span></span>
<svg class="a" style="left:92.8px;top:201.2px" width="5" height="5" viewBox="0 0 5 5"><ellipse cx="2.5" cy="2.7" rx="2.1" ry="1.8" fill="#565a56"/><ellipse cx="2.3" cy="1.7" rx="1" ry="0.6" fill="#a8aca8"/></svg>
<span class="t" style="left:102px;top:200px;font-size:7.2px;color:#262626;transform:translate3d(0,0.19px,0);"><span class="s" style="transform:scaleX(0.989)">Position:</span></span>
<span class="t" style="left:135px;top:200px;font-size:7.2px;color:#262626;transform:translate3d(0,0.19px,0);font-style:italic;"><span class="s" style="transform:scaleX(0.983)">-5.400 us</span></span>
<svg class="a" style="left:210.9px;top:200.9px" width="5" height="5" viewBox="0 0 5 5"><ellipse cx="2.5" cy="2.7" rx="2.1" ry="1.8" fill="#565a56"/><ellipse cx="2.3" cy="1.7" rx="1" ry="0.6" fill="#a8aca8"/></svg>
<span class="t" style="left:220px;top:199px;font-size:7.2px;color:#262626;transform:translate3d(0,0.99px,0);"><span class="s" style="transform:scaleX(1.039)">Scale:</span></span>
<span class="t" style="left:248px;top:199px;font-size:7.2px;color:#262626;transform:translate3d(0,0.99px,0);font-style:italic;"><span class="s" style="transform:scaleX(1.029)">42.000 us</span></span>
<span class="t" style="left:329px;top:71px;font-size:7.3px;color:#262626;transform:translate3d(0,0.49px,0);"><span class="s" style="transform:scaleX(1.006)">Freq Error: -1.456 kHz (Auto)</span></span>
<span class="t" style="left:443px;top:71px;font-size:7.3px;color:#262626;transform:translate3d(0,0.49px,0);"><span class="s" style="transform:scaleX(0.979)">Freq: 3.849998544 GHz</span></span>
<div class="a" style="left:306.2px;top:85.9px;width:284.09999999999997px;height:116.1px;border:0.8px solid #9fc3e6;background:#fff"></div>
<div class="a" style="left:306.2px;top:85.9px;width:284.09999999999997px;height:12.7px;background:linear-gradient(#ffffff 0%,#f4f4f5 50%,#e2e2e4 100%);border:0.8px solid #9fc3e6"></div>
<div class="a" style="left:314.8px;top:85.9px;width:0.8px;height:12.7px;background:#a8c8e8"></div>
<div class="a" style="left:354.40000000000003px;top:85.9px;width:0.8px;height:12.7px;background:#a8c8e8"></div>
<div class="a" style="left:416.0px;top:85.9px;width:0.8px;height:12.7px;background:#a8c8e8"></div>
<div class="a" style="left:465.90000000000003px;top:85.9px;width:0.8px;height:12.7px;background:#a8c8e8"></div>
<div class="a" style="left:516.5px;top:85.9px;width:0.8px;height:12.7px;background:#a8c8e8"></div>
<div class="a" style="left:581.0px;top:85.9px;width:0.8px;height:12.7px;background:#a8c8e8"></div>
<div class="a" style="left:306.2px;top:98.60000000000001px;width:9.0px;height:95.2px;background:linear-gradient(90deg,#fcfcfc,#e6e6e8);border-right:0.8px solid #a8cce8;border-left:0.8px solid #9fc3e6"></div>
<div class="a" style="left:0;top:0;width:600px;height:193.7px;overflow:hidden">
<div class="a" style="left:306.2px;top:110.15000000000002px;width:275.2px;height:0.7px;background:#e6e6ea"></div>
<div class="a" style="left:306.2px;top:110.10000000000001px;width:9.0px;height:0.8px;background:#a8cce8"></div>
<div class="a" style="left:306.2px;top:122.35000000000001px;width:275.2px;height:0.7px;background:#e6e6ea"></div>
<div class="a" style="left:306.2px;top:122.3px;width:9.0px;height:0.8px;background:#a8cce8"></div>
<div class="a" style="left:306.2px;top:134.54999999999998px;width:275.2px;height:0.7px;background:#e6e6ea"></div>
<div class="a" style="left:306.2px;top:134.49999999999997px;width:9.0px;height:0.8px;background:#a8cce8"></div>
<div class="a" style="left:306.2px;top:146.75px;width:275.2px;height:0.7px;background:#e6e6ea"></div>
<div class="a" style="left:306.2px;top:146.7px;width:9.0px;height:0.8px;background:#a8cce8"></div>
<div class="a" style="left:306.2px;top:158.95000000000002px;width:275.2px;height:0.7px;background:#e6e6ea"></div>
<div class="a" style="left:306.2px;top:158.9px;width:9.0px;height:0.8px;background:#a8cce8"></div>
<div class="a" style="left:306.2px;top:171.15px;width:275.2px;height:0.7px;background:#e6e6ea"></div>
<div class="a" style="left:306.2px;top:171.1px;width:9.0px;height:0.8px;background:#a8cce8"></div>
<div class="a" style="left:306.2px;top:183.35px;width:275.2px;height:0.7px;background:#e6e6ea"></div>
<div class="a" style="left:306.2px;top:183.29999999999998px;width:9.0px;height:0.8px;background:#a8cce8"></div>
<div class="a" style="left:306.2px;top:195.54999999999998px;width:275.2px;height:0.7px;background:#e6e6ea"></div>
<div class="a" style="left:306.2px;top:195.49999999999997px;width:9.0px;height:0.8px;background:#a8cce8"></div>
<div class="a" style="left:354.45px;top:98.60000000000001px;width:0.7px;height:110px;background:#e6e6ea"></div>
<div class="a" style="left:416.04999999999995px;top:98.60000000000001px;width:0.7px;height:110px;background:#e6e6ea"></div>
<div class="a" style="left:465.95px;top:98.60000000000001px;width:0.7px;height:110px;background:#e6e6ea"></div>
<div class="a" style="left:516.55px;top:98.60000000000001px;width:0.7px;height:110px;background:#e6e6ea"></div>
<div class="a" style="left:517.3px;top:111.2px;width:63.8px;height:11px;background:#6b88d9"></div>
<span class="t" style="left:317px;top:101px;font-size:7.3px;color:#262626;transform:translate3d(0,0.49px,0);">7*</span>
<span class="t" style="left:355px;top:101px;font-size:7.3px;color:#262626;transform:translate3d(0,0.49px,0);"><span class="s" style="transform:scaleX(0.980)">2.29922 MHz</span></span>
<span class="t" style="left:419px;top:101px;font-size:7.3px;color:#262626;transform:translate3d(0,0.49px,0);"><span class="s" style="transform:scaleX(1.030)">45.97366 <span class="d">°</span></span></span>
<span class="t" style="left:469px;top:101px;font-size:7.3px;color:#262626;transform:translate3d(0,0.49px,0);"><span class="s" style="transform:scaleX(1.030)">80.75333 <span class="d">°</span></span></span>
<span class="t" style="left:520px;top:101px;font-size:7.3px;color:#262626;transform:translate3d(0,0.49px,0);"><span class="s" style="transform:scaleX(0.980)">854.01882 MHz</span></span>
<span class="t" style="left:317px;top:113px;font-size:7.3px;color:#262626;transform:translate3d(0,0.69px,0);">8*</span>
<span class="t" style="left:355px;top:113px;font-size:7.3px;color:#262626;transform:translate3d(0,0.69px,0);"><span class="s" style="transform:scaleX(0.980)">-2.81098 MHz</span></span>
<span class="t" style="left:419px;top:113px;font-size:7.3px;color:#262626;transform:translate3d(0,0.69px,0);"><span class="s" style="transform:scaleX(1.030)">214.18208 <span class="d">°</span></span></span>
<span class="t" style="left:469px;top:113px;font-size:7.3px;color:#262626;transform:translate3d(0,0.69px,0);"><span class="s" style="transform:scaleX(1.030)">371.75885 <span class="d">°</span></span></span>
<span class="t" style="left:520px;top:113px;font-size:7.3px;color:#cfdcf8;transform:translate3d(0,0.69px,0);"><span class="s" style="transform:scaleX(0.980)">854.20742 MHz</span></span>
<span class="t" style="left:317px;top:125px;font-size:7.3px;color:#262626;transform:translate3d(0,0.89px,0);">9*</span>
<span class="t" style="left:355px;top:125px;font-size:7.3px;color:#262626;transform:translate3d(0,0.89px,0);"><span class="s" style="transform:scaleX(0.980)">-2.22786 MHz</span></span>
<span class="t" style="left:419px;top:125px;font-size:7.3px;color:#262626;transform:translate3d(0,0.89px,0);"><span class="s" style="transform:scaleX(1.030)">42.77620 <span class="d">°</span></span></span>
<span class="t" style="left:469px;top:125px;font-size:7.3px;color:#262626;transform:translate3d(0,0.89px,0);"><span class="s" style="transform:scaleX(1.030)">75.93384 <span class="d">°</span></span></span>
<span class="t" style="left:520px;top:125px;font-size:7.3px;color:#262626;transform:translate3d(0,0.89px,0);"><span class="s" style="transform:scaleX(0.980)">853.51757 MHz</span></span>
<span class="t" style="left:317px;top:138px;font-size:7.3px;color:#262626;transform:translate3d(0,0.09px,0);">10*</span>
<span class="t" style="left:355px;top:138px;font-size:7.3px;color:#262626;transform:translate3d(0,0.09px,0);"><span class="s" style="transform:scaleX(0.980)">2.72114 MHz</span></span>
<span class="t" style="left:419px;top:138px;font-size:7.3px;color:#262626;transform:translate3d(0,0.09px,0);"><span class="s" style="transform:scaleX(1.030)">168.31015 <span class="d">°</span></span></span>
<span class="t" style="left:469px;top:138px;font-size:7.3px;color:#262626;transform:translate3d(0,0.09px,0);"><span class="s" style="transform:scaleX(1.030)">292.48007 <span class="d">°</span></span></span>
<span class="t" style="left:520px;top:138px;font-size:7.3px;color:#262626;transform:translate3d(0,0.09px,0);"><span class="s" style="transform:scaleX(0.980)">854.82451 MHz</span></span>
<span class="t" style="left:317px;top:150px;font-size:7.3px;color:#262626;transform:translate3d(0,0.29px,0);">11*</span>
<span class="t" style="left:355px;top:150px;font-size:7.3px;color:#262626;transform:translate3d(0,0.29px,0);"><span class="s" style="transform:scaleX(0.980)">2.41669 MHz</span></span>
<span class="t" style="left:419px;top:150px;font-size:7.3px;color:#262626;transform:translate3d(0,0.29px,0);"><span class="s" style="transform:scaleX(1.030)">130.74944 <span class="d">°</span></span></span>
<span class="t" style="left:469px;top:150px;font-size:7.3px;color:#262626;transform:translate3d(0,0.29px,0);"><span class="s" style="transform:scaleX(1.030)">227.80133 <span class="d">°</span></span></span>
<span class="t" style="left:520px;top:150px;font-size:7.3px;color:#262626;transform:translate3d(0,0.29px,0);"><span class="s" style="transform:scaleX(0.980)">854.34042 MHz</span></span>
<span class="t" style="left:317px;top:162px;font-size:7.3px;color:#262626;transform:translate3d(0,0.49px,0);">12*</span>
<span class="t" style="left:355px;top:162px;font-size:7.3px;color:#262626;transform:translate3d(0,0.49px,0);"><span class="s" style="transform:scaleX(0.980)">-2.69752 MHz</span></span>
<span class="t" style="left:419px;top:162px;font-size:7.3px;color:#262626;transform:translate3d(0,0.49px,0);"><span class="s" style="transform:scaleX(1.030)">11.17540 <span class="d">°</span></span></span>
<span class="t" style="left:469px;top:162px;font-size:7.3px;color:#262626;transform:translate3d(0,0.49px,0);"><span class="s" style="transform:scaleX(1.030)">20.71875 <span class="d">°</span></span></span>
<span class="t" style="left:520px;top:162px;font-size:7.3px;color:#262626;transform:translate3d(0,0.49px,0);"><span class="s" style="transform:scaleX(0.980)">854.32410 MHz</span></span>
<span class="t" style="left:317px;top:174px;font-size:7.3px;color:#262626;transform:translate3d(0,0.69px,0);">13*</span>
<span class="t" style="left:355px;top:174px;font-size:7.3px;color:#262626;transform:translate3d(0,0.69px,0);"><span class="s" style="transform:scaleX(0.980)">2.26422 MHz</span></span>
<span class="t" style="left:419px;top:174px;font-size:7.3px;color:#262626;transform:translate3d(0,0.69px,0);"><span class="s" style="transform:scaleX(1.030)">24.98260 <span class="d">°</span></span></span>
<span class="t" style="left:469px;top:174px;font-size:7.3px;color:#262626;transform:translate3d(0,0.69px,0);"><span class="s" style="transform:scaleX(1.030)">44.25097 <span class="d">°</span></span></span>
<span class="t" style="left:520px;top:174px;font-size:7.3px;color:#262626;transform:translate3d(0,0.69px,0);"><span class="s" style="transform:scaleX(0.980)">853.63501 MHz</span></span>
<span class="t" style="left:317px;top:186px;font-size:7.3px;color:#262626;transform:translate3d(0,0.89px,0);">14*</span>
<span class="t" style="left:355px;top:186px;font-size:7.3px;color:#262626;transform:translate3d(0,0.89px,0);"><span class="s" style="transform:scaleX(0.980)">-2.71608 MHz</span></span>
<span class="t" style="left:419px;top:186px;font-size:7.3px;color:#262626;transform:translate3d(0,0.89px,0);"><span class="s" style="transform:scaleX(1.030)">255.19185 <span class="d">°</span></span></span>
<span class="t" style="left:469px;top:186px;font-size:7.3px;color:#262626;transform:translate3d(0,0.89px,0);"><span class="s" style="transform:scaleX(1.030)">443.06595 <span class="d">°</span></span></span>
<span class="t" style="left:520px;top:186px;font-size:7.3px;color:#262626;transform:translate3d(0,0.89px,0);"><span class="s" style="transform:scaleX(0.980)">854.45658 MHz</span></span>
</div>
<span class="t" style="left:318px;top:88px;font-size:7.3px;color:#262626;transform:translate3d(0,0.39px,0);"><span class="s" style="transform:scaleX(0.983)">Pulse #</span></span>
<span class="t" style="left:355px;top:88px;font-size:7.3px;color:#262626;transform:translate3d(0,0.39px,0);"><span class="s" style="transform:scaleX(0.891)">Max F Err</span></span>
<span class="t" style="left:419px;top:88px;font-size:7.3px;color:#262626;transform:translate3d(0,0.39px,0);"><span class="s" style="transform:scaleX(0.889)">RMS Ø Err</span></span>
<span class="t" style="left:469px;top:88px;font-size:7.3px;color:#262626;transform:translate3d(0,0.39px,0);"><span class="s" style="transform:scaleX(0.970)">Max Ø Err</span></span>
<span class="t" style="left:520px;top:88px;font-size:7.3px;color:#262626;transform:translate3d(0,0.39px,0);"><span class="s" style="transform:scaleX(0.937)">Freq Dev</span></span>
<span class="t" style="left:584px;top:88px;font-size:7.3px;color:#262626;transform:translate3d(0,0.39px,0);"><span class="s" style="transform:scaleX(0.867)">Ø</span></span>
<div class="a" style="left:354.3px;top:85.9px;width:1.1px;height:107.9px;background:#3b7cc9"></div>
<svg class="a" style="left:310.4px;top:114.6px" width="2.6" height="4.8" viewBox="0 0 2.6 4.8"><path d="M0 0 L2.6 2.4 L0 4.8 Z" fill="#2f6fc0"/></svg>
<div class="a" style="left:581.4px;top:98.6px;width:8.9px;height:95.2px;background:#fdfdfd;border-left:0.7px solid #dcdce0"></div>
<div class="a" style="left:581.6px;top:98.8px;width:8.5px;height:9.4px;border:0.7px solid #8db4de;border-radius:1.4px;background:linear-gradient(90deg,#f4f9fe,#cfe0f3)"></div>
<svg class="a" style="left:583.6px;top:102.2px" width="4.6" height="2.8" viewBox="0 0 4.6 2.8"><path d="M0.4 2.4 L2.3 0.5 L4.2 2.4" fill="none" stroke="#2e5c9a" stroke-width="0.9"/></svg>
<div class="a" style="left:581.6px;top:130.7px;width:8.5px;height:22.2px;border:0.7px solid #8db4de;border-radius:1.4px;background:linear-gradient(90deg,#f4f9fe,#cfe0f3)"></div>
<div class="a" style="left:584.9px;top:140.9px;width:1.8px;height:1.8px;background:#5a9ad8"></div>
<div class="a" style="left:581.6px;top:184.2px;width:8.5px;height:8.9px;border:0.7px solid #8db4de;border-radius:1.4px;background:linear-gradient(90deg,#f4f9fe,#cfe0f3)"></div>
<svg class="a" style="left:583.6px;top:187.4px" width="4.6" height="2.8" viewBox="0 0 4.6 2.8"><path d="M0.4 0.4 L2.3 2.3 L4.2 0.4" fill="none" stroke="#2e5c9a" stroke-width="0.9"/></svg>
<div class="a" style="left:306.2px;top:193.7px;width:284.09999999999997px;height:8.3px;background:#f6f6f8;border-top:0.7px solid #a8c8e8"></div>
<div class="a" style="left:581.4px;top:193.7px;width:8.9px;height:8.3px;background:#fff"></div>
<div class="a" style="left:306.3px;top:194.2px;width:9.6px;height:7.6px;border:0.7px solid #8db4de;border-radius:1.4px;background:linear-gradient(#f4f9fe,#cfe0f3)"></div>
<svg class="a" style="left:309.6px;top:195.8px" width="2.8" height="4.6" viewBox="0 0 2.8 4.6"><path d="M2.4 0.4 L0.5 2.3 L2.4 4.2" fill="none" stroke="#2e5c9a" stroke-width="0.9"/></svg>
<div class="a" style="left:473.9px;top:194.2px;width:27.8px;height:7.6px;border:0.7px solid #8db4de;border-radius:1.4px;background:linear-gradient(#f4f9fe,#cfe0f3)"></div>
<div class="a" style="left:487px;top:197.1px;width:1.8px;height:1.8px;background:#5a9ad8"></div>
<div class="a" style="left:571.6px;top:194.2px;width:9.2px;height:7.6px;border:0.7px solid #8db4de;border-radius:1.4px;background:linear-gradient(#f4f9fe,#cfe0f3)"></div>
<svg class="a" style="left:575px;top:195.8px" width="2.8" height="4.6" viewBox="0 0 2.8 4.6"><path d="M0.4 0.4 L2.3 2.3 L0.4 4.2" fill="none" stroke="#2e5c9a" stroke-width="0.9"/></svg>
<div class="a" style="left:304px;top:205.7px;width:286.6px;height:14.3px;background:#ffff00"></div>
<span class="t" style="left:311px;top:209px;font-size:6px;color:#333;transform:translate3d(0,0.37px,0);font-weight:bold;">*</span>
<svg class="a" style="left:61.5px;top:241.2px" width="5" height="5" viewBox="0 0 5 5"><ellipse cx="2.5" cy="2.7" rx="2.1" ry="1.8" fill="#565a56"/><ellipse cx="2.3" cy="1.7" rx="1" ry="0.6" fill="#a8aca8"/></svg>
<span class="t" style="left:73px;top:240px;font-size:7.3px;color:#262626;transform:translate3d(0,0.09px,0);">1.07 G</span>
<span class="t" style="left:9px;top:250px;font-size:7.3px;color:#262626;transform:translate3d(0,0.89px,0);"><span class="s" style="transform:scaleX(0.977)">Result:</span></span>
<div class="a" style="left:72.6px;top:251.7px;width:41.4px;height:10.9px;border:0.8px solid #cdd3da;background:#fff"></div>
<div class="a" style="left:104.1px;top:252.79999999999998px;width:8.7px;height:8.7px;border:0.7px solid #7aa4d6;border-radius:1.5px;background:linear-gradient(#e8f2fc,#b8d4f0)"></div>
<svg class="a" style="left:106.25px;top:255.94999999999996px" width="4.4" height="2.8" viewBox="0 0 4.4 2.8"><path d="M0.4 0.5 L2.2 2.3 L4 0.5" fill="none" stroke="#2e5c9a" stroke-width="0.9"/></svg>
<span class="t" style="left:76px;top:253px;font-size:7.2px;color:#262626;transform:translate3d(0,0.84px,0);">dBm</span>
<div class="a" style="left:8.6px;top:259.7px;width:50px;height:11.9px;border:0.8px solid #cdd3da;background:#fff"></div>
<div class="a" style="left:47.7px;top:260.8px;width:9.7px;height:9.7px;border:0.7px solid #7aa4d6;border-radius:1.5px;background:linear-gradient(#e8f2fc,#b8d4f0)"></div>
<svg class="a" style="left:50.349999999999994px;top:264.45px" width="4.4" height="2.8" viewBox="0 0 4.4 2.8"><path d="M0.4 0.5 L2.2 2.3 L4 0.5" fill="none" stroke="#2e5c9a" stroke-width="0.9"/></svg>
<span class="t" style="left:12px;top:262px;font-size:7.2px;color:#262626;transform:translate3d(0,0.34px,0);"><span class="s" style="transform:scaleX(0.983)">Freq Dev</span></span>
<svg class="a" style="left:8.0px;top:279.3px" width="5" height="5" viewBox="0 0 5 5"><ellipse cx="2.5" cy="2.7" rx="2.1" ry="1.8" fill="#565a56"/><ellipse cx="2.3" cy="1.7" rx="1" ry="0.6" fill="#a8aca8"/></svg>
<span class="t" style="left:18px;top:278px;font-size:7.3px;color:#262626;transform:translate3d(0,0.09px,0);"><span class="s" style="transform:scaleX(0.889)">Pulse* 8</span></span>
<span class="t" style="left:16px;top:294px;font-size:7.3px;color:#262626;transform:translate3d(0,0.09px,0);"><span class="s" style="transform:scaleX(0.980)">854.20742 MHz</span></span>
<span class="t" style="left:69px;top:316px;font-size:7.3px;color:#262626;transform:translate3d(0,0.09px,0);"><span class="s" style="transform:scaleX(1.027)">Position:</span></span>
<span class="t" style="left:71px;top:325px;font-size:7.3px;color:#262626;transform:translate3d(0,0.49px,0);"><span class="s" style="transform:scaleX(0.959)">85.3 kHz</span></span>
<svg class="a" style="left:61.4px;top:322.8px" width="5" height="5" viewBox="0 0 5 5"><ellipse cx="2.5" cy="2.7" rx="2.1" ry="1.8" fill="#565a56"/><ellipse cx="2.3" cy="1.7" rx="1" ry="0.6" fill="#a8aca8"/></svg>
<span class="t" style="left:62px;top:346px;font-size:7.3px;color:#262626;transform:translate3d(0,0.09px,0);"><span class="s" style="transform:scaleX(0.967)">-1.07 GHz</span></span>
<div class="a" style="left:63.5px;top:377.3px;width:42px;height:12.7px;border:0.9px solid #84a0bc;border-radius:2px;background:linear-gradient(#fafafa,#e2e3e5)"></div>
<span class="t" style="left:69px;top:380px;font-size:7.2px;color:#262626;transform:translate3d(0,0.34px,0);"><span class="s" style="transform:scaleX(0.958)">Autoscale</span></span>
<svg class="a" style="left:113.0px;top:382.1px" width="5" height="5" viewBox="0 0 5 5"><ellipse cx="2.5" cy="2.7" rx="2.1" ry="1.8" fill="#565a56"/><ellipse cx="2.3" cy="1.7" rx="1" ry="0.6" fill="#a8aca8"/></svg>
<span class="t" style="left:124px;top:381px;font-size:7.3px;color:#262626;transform:translate3d(0,0.19px,0);"><span class="s" style="transform:scaleX(1.024)">1.54 ms</span></span>
<svg class="a" style="left:226.7px;top:381.9px" width="5" height="5" viewBox="0 0 5 5"><ellipse cx="2.5" cy="2.7" rx="2.1" ry="1.8" fill="#565a56"/><ellipse cx="2.3" cy="1.7" rx="1" ry="0.6" fill="#a8aca8"/></svg>
<span class="t" style="left:236px;top:380px;font-size:7.3px;color:#262626;transform:translate3d(0,0.79px,0);"><span class="s" style="transform:scaleX(0.945)">Scale:</span></span>
<span class="t" style="left:262px;top:380px;font-size:7.3px;color:#262626;transform:translate3d(0,0.79px,0);"><span class="s" style="transform:scaleX(1.008)">31.8 us</span></span>
<div class="a" style="left:118.2px;top:372.2px;width:172.8px;height:1.6px;background:#f3f3f5"></div>
<span class="t" style="left:448px;top:240px;font-size:7.4px;color:#262626;transform:translate3d(0,0.89px,0);"><span class="s" style="transform:scaleX(0.915)">+Peak Normal</span></span>
<div class="a" style="left:567.3px;top:238.6px;width:23px;height:11px;border:1px solid #9ec2e6;border-radius:2px;background:linear-gradient(#fdfdfd,#e9eaec)"></div>
<span class="t" style="left:572px;top:241px;font-size:6.9px;color:#262626;transform:translate3d(0,0.79px,0);"><span class="s" style="transform:scaleX(0.925)">Clear</span></span>
<svg class="a" style="left:303.5px;top:253.89999999999998px" width="5" height="5" viewBox="0 0 5 5"><ellipse cx="2.5" cy="2.7" rx="2.1" ry="1.8" fill="#565a56"/><ellipse cx="2.3" cy="1.7" rx="1" ry="0.6" fill="#a8aca8"/></svg>
<span class="t" style="left:316px;top:252px;font-size:7.3px;color:#262626;transform:translate3d(0,0.79px,0);"><span class="s" style="transform:scaleX(1.065)">315 k<span class="d">°</span></span></span>
<span class="t" style="left:310px;top:300px;font-size:7.3px;color:#262626;transform:translate3d(0,0.99px,0);"><span class="s" style="transform:scaleX(1.035)">Position:</span></span>
<span class="t" style="left:313px;top:310px;font-size:7.3px;color:#262626;transform:translate3d(0,0.29px,0);"><span class="s" style="transform:scaleX(0.991)">-394 k<span class="d">°</span></span></span>
<svg class="a" style="left:303.5px;top:307.5px" width="5" height="5" viewBox="0 0 5 5"><ellipse cx="2.5" cy="2.7" rx="2.1" ry="1.8" fill="#565a56"/><ellipse cx="2.3" cy="1.7" rx="1" ry="0.6" fill="#a8aca8"/></svg>
<span class="t" style="left:305px;top:352px;font-size:7.3px;color:#262626;transform:translate3d(0,0.89px,0);">-1.10 M<span class="d">°</span></span>
<div class="a" style="left:304.2px;top:366.2px;width:42.4px;height:12.6px;border:0.9px solid #84a0bc;border-radius:2px;background:linear-gradient(#fafafa,#e2e3e5)"></div>
<span class="t" style="left:310px;top:369px;font-size:7.2px;color:#262626;transform:translate3d(0,0.19px,0);"><span class="s" style="transform:scaleX(0.968)">Autoscale</span></span>
<span class="t" style="left:308px;top:381px;font-size:6.6px;color:#262626;transform:translate3d(0,0.49px,0);"><span class="s" style="transform:scaleX(0.929)">Max:</span></span>
<span class="t" style="left:330px;top:381px;font-size:6.6px;color:#262626;transform:translate3d(0,0.49px,0);"><span class="s" style="transform:scaleX(0.984)">166400 <span class="d">°</span></span></span>
<svg class="a" style="left:364.5px;top:372.2px" width="5" height="5" viewBox="0 0 5 5"><ellipse cx="2.5" cy="2.7" rx="2.1" ry="1.8" fill="#565a56"/><ellipse cx="2.3" cy="1.7" rx="1" ry="0.6" fill="#a8aca8"/></svg>
<span class="t" style="left:374px;top:371px;font-size:7.3px;color:#262626;transform:translate3d(0,0.09px,0);"><span class="s" style="transform:scaleX(0.985)">Position:</span></span>
<span class="t" style="left:407px;top:371px;font-size:7.3px;color:#262626;transform:translate3d(0,0.09px,0);font-style:italic;"><span class="s" style="transform:scaleX(0.980)">-5.400 us</span></span>
<span class="t" style="left:379px;top:381px;font-size:6.4px;color:#1c1c1c;transform:translate3d(0,0.79px,0);font-weight:bold;"><span class="s" style="transform:scaleX(0.867)">@</span></span>
<span class="t" style="left:389px;top:381px;font-size:6.6px;color:#262626;transform:translate3d(0,0.69px,0);"><span class="s" style="transform:scaleX(0.960)">33.98 us</span></span>
<span class="t" style="left:423px;top:381px;font-size:6.6px;color:#262626;transform:translate3d(0,0.69px,0);"><span class="s" style="transform:scaleX(0.883)">Min:</span></span>
<span class="t" style="left:445px;top:381px;font-size:6.6px;color:#262626;transform:translate3d(0,0.69px,0);"><span class="s" style="transform:scaleX(0.969)">-1058000 <span class="d">°</span></span></span>
<span class="t" style="left:494px;top:381px;font-size:6.4px;color:#1c1c1c;transform:translate3d(0,0.79px,0);font-weight:bold;"><span class="s" style="transform:scaleX(0.867)">@</span></span>
<span class="t" style="left:503px;top:381px;font-size:6.6px;color:#262626;transform:translate3d(0,0.69px,0);"><span class="s" style="transform:scaleX(0.987)">13.25 us</span></span>
<svg class="a" style="left:509.2px;top:372.2px" width="5" height="5" viewBox="0 0 5 5"><ellipse cx="2.5" cy="2.7" rx="2.1" ry="1.8" fill="#565a56"/><ellipse cx="2.3" cy="1.7" rx="1" ry="0.6" fill="#a8aca8"/></svg>
<span class="t" style="left:518px;top:371px;font-size:7.3px;color:#262626;transform:translate3d(0,0.09px,0);"><span class="s" style="transform:scaleX(0.920)">Scale:</span></span>
<span class="t" style="left:546px;top:371px;font-size:7.3px;color:#262626;transform:translate3d(0,0.09px,0);font-style:italic;"><span class="s" style="transform:scaleX(0.969)">42.000 us</span></span>
<div class="a" style="left:0px;top:393.4px;width:600px;height:19.4px;background:#fff"></div>
<div class="a" style="left:0px;top:393.4px;width:1.2px;height:22px;background:#3d6fb4"></div>
<div class="a" style="left:0px;top:413.3px;width:600px;height:1.7px;background:linear-gradient(#5ca6e6,#3a78c4)"></div>
<span class="t" style="left:3px;top:400px;font-size:9.1px;color:#222;transform:translate3d(0,0.26px,0);-webkit-text-stroke:0.1px #111;"><span class="s" style="transform:scaleX(0.948)">Amp Vs Time</span></span>
<span class="t" style="left:68px;top:400px;font-size:9.1px;color:#222;transform:translate3d(0,0.26px,0);-webkit-text-stroke:0.1px #111;"><span class="s" style="transform:scaleX(0.929)">Frequency</span></span>
<div class="a" style="left:111px;top:397.4px;width:55px;height:13.3px;border:0.9px solid #c2c2c2;background:#fff"></div>
<span class="t" style="left:113px;top:400px;font-size:9.1px;color:#222;transform:translate3d(0,0.46px,0);-webkit-text-stroke:0.1px #111;"><span class="s" style="transform:scaleX(0.919)">3.85000 GHz</span></span>
<span class="t" style="left:188px;top:400px;font-size:9.1px;color:#222;transform:translate3d(0,0.36px,0);-webkit-text-stroke:0.1px #111;"><span class="s" style="transform:scaleX(0.953)">Ref Lev</span></span>
<div class="a" style="left:221.6px;top:397.4px;width:55.6px;height:13.3px;border:0.9px solid #c2c2c2;background:#fff"></div>
<span class="t" style="left:225px;top:400px;font-size:9.1px;color:#222;transform:translate3d(0,0.46px,0);-webkit-text-stroke:0.1px #111;"><span class="s" style="transform:scaleX(0.943)">-8.00 dBm</span></span>
<span class="t" style="left:292px;top:400px;font-size:9.1px;color:#222;transform:translate3d(0,0.36px,0);-webkit-text-stroke:0.1px #111;"><span class="s" style="transform:scaleX(0.974)">Meas BW</span></span>
<div class="a" style="left:332.4px;top:397.4px;width:55.5px;height:13.3px;border:0.9px solid #c2c2c2;background:#fff"></div>
<span class="t" style="left:335px;top:400px;font-size:9.1px;color:#222;transform:translate3d(0,0.46px,0);-webkit-text-stroke:0.1px #111;"><span class="s" style="transform:scaleX(0.900)">1.000 GHz</span></span>
<div class="a" style="left:508.3px;top:396.9px;width:34.9px;height:13.8px;border:0.8px solid #9db9da;border-radius:1.6px;background:linear-gradient(#fbfbfc,#e3e5e8)"></div>
<span class="t" style="left:510px;top:400px;font-size:9.1px;color:#222;transform:translate3d(0,0.06px,0);-webkit-text-stroke:0.1px #111;"><span class="s" style="transform:scaleX(0.919)">Markers</span></span>
<div class="a" style="left:546px;top:396.9px;width:30.2px;height:13.8px;border:0.8px solid #9db9da;border-radius:1.6px;background:linear-gradient(#fbfbfc,#e3e5e8)"></div>
<span class="t" style="left:549px;top:400px;font-size:9.1px;color:#222;transform:translate3d(0,0.06px,0);-webkit-text-stroke:0.1px #111;"><span class="s" style="transform:scaleX(0.937)">Traces</span></span>
<div class="a" style="left:579px;top:396.9px;width:14.7px;height:13.8px;border:0.8px solid #9db9da;border-radius:1.6px;background:linear-gradient(#fbfbfc,#e3e5e8)"></div>
<svg class="a" style="left:580.6px;top:398.1px" width="11.6" height="11.6" viewBox="0 0 11.6 11.6"><path d="M9.98 4.80 L11.43 4.91 L11.43 6.69 L9.98 6.80 L9.47 8.05 L10.41 9.15 L9.15 10.41 L8.05 9.47 L6.80 9.98 L6.69 11.43 L4.91 11.43 L4.80 9.98 L3.55 9.47 L2.45 10.41 L1.19 9.15 L2.13 8.05 L1.62 6.80 L0.17 6.69 L0.17 4.91 L1.62 4.80 L2.13 3.55 L1.19 2.45 L2.45 1.19 L3.55 2.13 L4.80 1.62 L4.91 0.17 L6.69 0.17 L6.80 1.62 L8.05 2.13 L9.15 1.19 L10.41 2.45 L9.47 3.55 Z" fill="#0c0c0c" stroke="#0c0c0c" stroke-width="0.5" stroke-linejoin="round"/><circle cx="5.8" cy="5.8" r="2.3" fill="#fff"/></svg>
</body></html>
